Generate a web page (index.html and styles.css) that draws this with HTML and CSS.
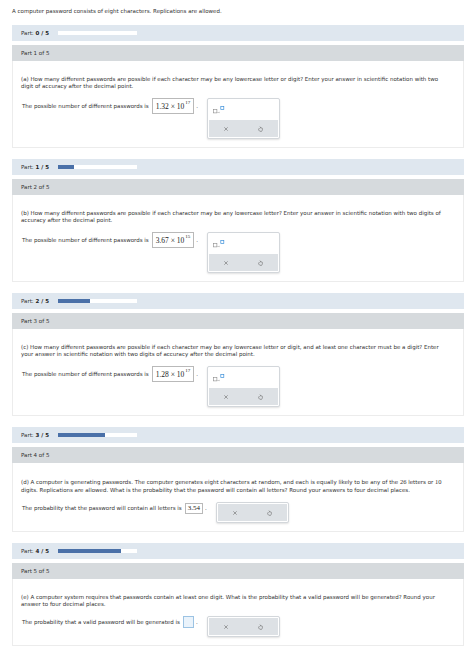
FILE: index.html
```html
<!DOCTYPE html>
<html lang="en">
<head>
<meta charset="utf-8">
<title>Password problem</title>
<link rel="stylesheet" href="styles.css">
</head>
<body>
<div class="page">
  <p class="intro">A computer password consists of eight characters. Replications are allowed.</p>

  <section class="part">
    <div class="status"><span class="status-label">Part: <b>0 / 5</b></span><div class="track"><div class="fill" style="width:0%"></div></div></div>
    <div class="head">Part 1 of 5</div>
    <div class="card">
      <p class="q">(a) How many different passwords are possible if each character may be any lowercase letter or digit? Enter your answer in scientific notation with two digit of accuracy after the decimal point.</p>
      <div class="answer">
        <div class="lead"><span>The possible number of different passwords is</span><span class="box box-sci">1.32 × 10<sup>17</sup></span><span class="period">.</span></div>
        <div class="tools">
          <div class="tools-top">
            <svg class="sci-icon" width="12" height="8" viewBox="0 0 12 8"><rect x="0.5" y="3.5" width="3.4" height="3.4" fill="none" stroke="#8a8a8a" stroke-width="0.6"/><path d="M4.6 6 L5.6 7 M5.6 6 L4.6 7 M6.4 5.8 V7.1" stroke="#8a8a8a" stroke-width="0.4" fill="none"/><rect x="7.8" y="0.5" width="3" height="3" fill="none" stroke="#3b8fd9" stroke-width="0.7"/></svg>
          </div>
          <div class="actions">
            <span><svg width="4" height="4" viewBox="0 0 4 4"><path d="M0.3 0.3 L3.7 3.7 M3.7 0.3 L0.3 3.7" stroke="#6b6b6b" stroke-width="0.6"/></svg></span>
            <span><svg width="5" height="6" viewBox="0 0 5 6"><path d="M1.2 2.2 A1.9 1.9 0 1 0 2.5 1.6" fill="none" stroke="#6b6b6b" stroke-width="0.6"/><path d="M1.7 0.6 L2.8 1.6 L1.7 2.4" fill="none" stroke="#6b6b6b" stroke-width="0.6"/></svg></span>
          </div>
        </div>
      </div>
    </div>
  </section>

  <section class="part">
    <div class="status"><span class="status-label">Part: <b>1 / 5</b></span><div class="track"><div class="fill" style="width:20%"></div></div></div>
    <div class="head">Part 2 of 5</div>
    <div class="card">
      <p class="q">(b) How many different passwords are possible if each character may be any lowercase letter? Enter your answer in scientific notation with two digits of accuracy after the decimal point.</p>
      <div class="answer">
        <div class="lead"><span>The possible number of different passwords is</span><span class="box box-sci">3.67 × 10<sup>15</sup></span><span class="period">.</span></div>
        <div class="tools">
          <div class="tools-top">
            <svg class="sci-icon" width="12" height="8" viewBox="0 0 12 8"><rect x="0.5" y="3.5" width="3.4" height="3.4" fill="none" stroke="#8a8a8a" stroke-width="0.6"/><path d="M4.6 6 L5.6 7 M5.6 6 L4.6 7 M6.4 5.8 V7.1" stroke="#8a8a8a" stroke-width="0.4" fill="none"/><rect x="7.8" y="0.5" width="3" height="3" fill="none" stroke="#3b8fd9" stroke-width="0.7"/></svg>
          </div>
          <div class="actions">
            <span><svg width="4" height="4" viewBox="0 0 4 4"><path d="M0.3 0.3 L3.7 3.7 M3.7 0.3 L0.3 3.7" stroke="#6b6b6b" stroke-width="0.6"/></svg></span>
            <span><svg width="5" height="6" viewBox="0 0 5 6"><path d="M1.2 2.2 A1.9 1.9 0 1 0 2.5 1.6" fill="none" stroke="#6b6b6b" stroke-width="0.6"/><path d="M1.7 0.6 L2.8 1.6 L1.7 2.4" fill="none" stroke="#6b6b6b" stroke-width="0.6"/></svg></span>
          </div>
        </div>
      </div>
    </div>
  </section>

  <section class="part">
    <div class="status"><span class="status-label">Part: <b>2 / 5</b></span><div class="track"><div class="fill" style="width:40%"></div></div></div>
    <div class="head">Part 3 of 5</div>
    <div class="card">
      <p class="q">(c) How many different passwords are possible if each character may be any lowercase letter or digit, and at least one character must be a digit? Enter your answer in scientific notation with two digits of accuracy after the decimal point.</p>
      <div class="answer">
        <div class="lead"><span>The possible number of different passwords is</span><span class="box box-sci">1.28 × 10<sup>17</sup></span><span class="period">.</span></div>
        <div class="tools">
          <div class="tools-top">
            <svg class="sci-icon" width="12" height="8" viewBox="0 0 12 8"><rect x="0.5" y="3.5" width="3.4" height="3.4" fill="none" stroke="#8a8a8a" stroke-width="0.6"/><path d="M4.6 6 L5.6 7 M5.6 6 L4.6 7 M6.4 5.8 V7.1" stroke="#8a8a8a" stroke-width="0.4" fill="none"/><rect x="7.8" y="0.5" width="3" height="3" fill="none" stroke="#3b8fd9" stroke-width="0.7"/></svg>
          </div>
          <div class="actions">
            <span><svg width="4" height="4" viewBox="0 0 4 4"><path d="M0.3 0.3 L3.7 3.7 M3.7 0.3 L0.3 3.7" stroke="#6b6b6b" stroke-width="0.6"/></svg></span>
            <span><svg width="5" height="6" viewBox="0 0 5 6"><path d="M1.2 2.2 A1.9 1.9 0 1 0 2.5 1.6" fill="none" stroke="#6b6b6b" stroke-width="0.6"/><path d="M1.7 0.6 L2.8 1.6 L1.7 2.4" fill="none" stroke="#6b6b6b" stroke-width="0.6"/></svg></span>
          </div>
        </div>
      </div>
    </div>
  </section>

  <section class="part">
    <div class="status"><span class="status-label">Part: <b>3 / 5</b></span><div class="track"><div class="fill" style="width:60%"></div></div></div>
    <div class="head">Part 4 of 5</div>
    <div class="card">
      <p class="q q-tall">(d) A computer is generating passwords. The computer generates eight characters at random, and each is equally likely to be any of the <span class="num">26</span> letters or <span class="num">10</span> digits. Replications are allowed. What is the probability that the password will contain all letters? Round your answers to four decimal places.</p>
      <div class="answer">
        <div class="lead lead-small"><span>The probability that the password will contain all letters is</span><span class="box box-plain">3.54</span><span class="period">.</span></div>
        <div class="tools tools-flat">
          <div class="actions">
            <span><svg width="4" height="4" viewBox="0 0 4 4"><path d="M0.3 0.3 L3.7 3.7 M3.7 0.3 L0.3 3.7" stroke="#6b6b6b" stroke-width="0.6"/></svg></span>
            <span><svg width="5" height="6" viewBox="0 0 5 6"><path d="M1.2 2.2 A1.9 1.9 0 1 0 2.5 1.6" fill="none" stroke="#6b6b6b" stroke-width="0.6"/><path d="M1.7 0.6 L2.8 1.6 L1.7 2.4" fill="none" stroke="#6b6b6b" stroke-width="0.6"/></svg></span>
          </div>
        </div>
      </div>
    </div>
  </section>

  <section class="part">
    <div class="status"><span class="status-label">Part: <b>4 / 5</b></span><div class="track"><div class="fill" style="width:80%"></div></div></div>
    <div class="head">Part 5 of 5</div>
    <div class="card">
      <p class="q">(e) A computer system requires that passwords contain at least one digit. What is the probability that a valid password will be generated? Round your answer to four decimal places.</p>
      <div class="answer">
        <div class="lead lead-small"><span>The probability that a valid password will be generated is</span><span class="box box-empty"></span><span class="period">.</span></div>
        <div class="tools tools-flat">
          <div class="actions">
            <span><svg width="4" height="4" viewBox="0 0 4 4"><path d="M0.3 0.3 L3.7 3.7 M3.7 0.3 L0.3 3.7" stroke="#6b6b6b" stroke-width="0.6"/></svg></span>
            <span><svg width="5" height="6" viewBox="0 0 5 6"><path d="M1.2 2.2 A1.9 1.9 0 1 0 2.5 1.6" fill="none" stroke="#6b6b6b" stroke-width="0.6"/><path d="M1.7 0.6 L2.8 1.6 L1.7 2.4" fill="none" stroke="#6b6b6b" stroke-width="0.6"/></svg></span>
          </div>
        </div>
      </div>
    </div>
  </section>
</div>
</body>
</html>
```

FILE: styles.css
```css
* { box-sizing: border-box; }

body {
  margin: 0;
  background: #ffffff;
  font-family: "DejaVu Sans", Verdana, sans-serif;
  font-size: 5.5px;
  line-height: 7px;
  color: #333333;
}

.page {
  padding: 8px 10px 12px 12px;
}

.intro {
  margin: 0 0 10px 0;
}

.part {
  margin-bottom: 11px;
}

.status {
  height: 16px;
  background: #dfe7ef;
  display: flex;
  align-items: center;
  padding-left: 9px;
}

.status b {
  font-weight: bold;
  color: #222222;
}

.status-label {
  width: 37px;
}

.track {
  width: 79px;
  height: 4px;
  background: #ffffff;
}

.fill {
  height: 100%;
  background: #4a70a8;
}

.head {
  margin-top: 4px;
  height: 16px;
  background: #d6dadd;
  display: flex;
  align-items: center;
  padding-left: 9px;
}

.card {
  border: 1px solid #ececec;
  border-top: none;
  padding: 15px 12px 8px 8px;
}

.q {
  margin: 0;
}

.q-tall {
  line-height: 8px;
}

.num {
  font-family: "Liberation Serif", "Times New Roman", serif;
  font-size: 6.5px;
  line-height: 1;
}

.answer {
  display: flex;
  align-items: flex-start;
  margin-top: 8px;
  padding-left: 1px;
}

.lead {
  display: flex;
  align-items: center;
  height: 16px;
}

.lead-small {
  height: 12px;
}

.box {
  margin-left: 3px;
  border: 1px solid #b9b9b9;
  display: flex;
  align-items: center;
  font-family: "Liberation Serif", "Times New Roman", serif;
  color: #222222;
}

.box-sci {
  height: 16px;
  padding: 0 3px 0 3px;
  font-size: 7.5px;
}

.box-sci sup {
  font-size: 5px;
  line-height: 1;
  align-self: flex-start;
  margin-top: 1px;
  margin-left: 1px;
}

.box-plain {
  height: 11px;
  padding: 0 2px;
  font-size: 7px;
}

.box-empty {
  height: 12px;
  width: 11px;
  background: #eaf3fb;
  border-color: #9cc3e3;
}

.period {
  margin-left: 2px;
}

.tools {
  margin-left: 9px;
  width: 73px;
  background: #ffffff;
  border: 1px solid #d3d7db;
  border-radius: 2px;
  box-shadow: 0 1px 2px rgba(0, 0, 0, 0.12);
  padding: 0 1px 1px 1px;
}

.tools-flat {
  padding: 1px;
}

.tools-top {
  height: 21px;
  display: flex;
  align-items: center;
  padding-left: 4px;
}

.sci-icon {
  display: block;
}

.actions {
  height: 17px;
  background: #dde1e5;
  display: flex;
}

.actions span {
  flex: 1;
  display: flex;
  align-items: center;
  justify-content: center;
}

.actions svg {
  display: block;
}
```
